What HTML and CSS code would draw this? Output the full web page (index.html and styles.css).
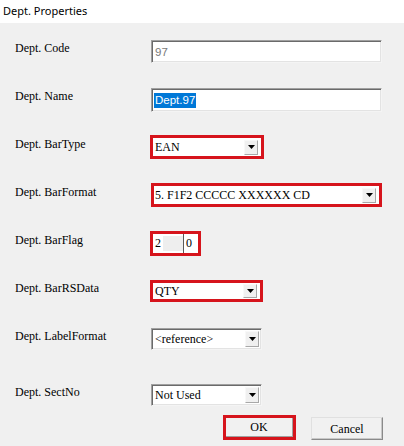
FILE: index.html
```html
<!DOCTYPE html>
<html>
<head>
<meta charset="utf-8">
<link rel="stylesheet" href="styles.css">
</head>
<body>
<div class="title">Dept. Properties</div>
<div class="form">
  <div class="row">
    <div class="label">Dept. Code</div>
    <div class="edit disabled">97</div>
  </div>
  <div class="row">
    <div class="label">Dept. Name</div>
    <div class="edit tall"><span class="sel">Dept.97</span></div>
  </div>
  <div class="row">
    <div class="label">Dept. BarType</div>
    <div class="hl hl-type up left">
      <span class="txt">EAN</span>
      <span class="arrow"><svg width="7" height="4" viewBox="0 0 7 4"><path d="M0 0H7L3.5 4Z"/></svg></span>
    </div>
  </div>
  <div class="row">
    <div class="label">Dept. BarFormat</div>
    <div class="hl hl-format up">
      <span class="txt">5. F1F2 CCCCC XXXXXX CD</span>
      <span class="arrow"><svg width="7" height="4" viewBox="0 0 7 4"><path d="M0 0H7L3.5 4Z"/></svg></span>
    </div>
  </div>
  <div class="row">
    <div class="label">Dept. BarFlag</div>
    <div class="hl hl-flag up left">
      <span class="flag-a">2</span>
      <span class="flag-gap"></span>
      <span class="flag-sep"></span>
      <span class="flag-b">0</span>
    </div>
  </div>
  <div class="row">
    <div class="label">Dept. BarRSData</div>
    <div class="hl hl-rs left">
      <span class="txt">QTY</span>
      <span class="arrow"><svg width="7" height="4" viewBox="0 0 7 4"><path d="M0 0H7L3.5 4Z"/></svg></span>
    </div>
  </div>
  <div class="row">
    <div class="label">Dept. LabelFormat</div>
    <div class="combo">
      <span class="txt">&lt;reference&gt;</span>
      <span class="arrow"><svg width="7" height="4" viewBox="0 0 7 4"><path d="M0 0H7L3.5 4Z"/></svg></span>
    </div>
  </div>
  <div class="row last">
    <div class="label">Dept. SectNo</div>
    <div class="combo">
      <span class="txt">Not Used</span>
      <span class="arrow"><svg width="7" height="4" viewBox="0 0 7 4"><path d="M0 0H7L3.5 4Z"/></svg></span>
    </div>
  </div>
</div>
<div class="buttons">
  <div class="ok-wrap"><div class="btn ok">OK</div></div>
  <div class="btn cancel">Cancel</div>
</div>
</body>
</html>
```

FILE: styles.css
```css
html, body {
  margin: 0;
  padding: 0;
}

body {
  width: 404px;
  height: 446px;
  overflow: hidden;
  background: #f0f0f0;
  font-family: "Liberation Serif", "Times New Roman", serif;
  font-size: 12px;
  color: #000;
}

.title {
  height: 23px;
  background: #fff;
  font-family: "Noto Sans", "Liberation Sans", sans-serif;
  font-size: 11px;
  line-height: 22px;
  padding-left: 3px;
}

.form {
  padding: 17px 0 0 15px;
}

.row {
  display: flex;
  align-items: flex-start;
  height: 48px;
}

.row.last {
  margin-top: 8px;
  height: 31px;
}

.label {
  width: 136px;
  flex: none;
  line-height: 16px;
}

.edit {
  box-sizing: border-box;
  width: 231px;
  height: 23px;
  background: #fff;
  border-top: 1px solid #a0a0a0;
  border-left: 1px solid #a0a0a0;
  border-right: 1px solid #f4f4f4;
  border-bottom: 1px solid #f4f4f4;
  box-shadow: inset 1px 1px 0 #6a6a6a, inset -1px -1px 0 #e3e3e3;
  font-family: "Liberation Sans", Arial, sans-serif;
  font-size: 11.5px;
  display: flex;
  align-items: center;
  padding-left: 3px;
}

.edit.tall {
  height: 24px;
  padding-left: 2px;
}

.edit.disabled {
  color: #7a7a7a;
}

.sel {
  background: #0078d7;
  color: #fff;
  line-height: 15px;
  padding: 0 1px;
}

.hl {
  box-sizing: border-box;
  border: 3px solid #d6141c;
  background: #fff;
  display: flex;
  align-items: center;
}

.hl.up {
  margin-top: -1px;
}

.hl.left {
  margin-left: -1px;
}

.hl-type {
  width: 114px;
  height: 24px;
  padding-left: 2px;
}

.hl-format {
  width: 231px;
  height: 24px;
  padding-left: 1px;
}

.hl-flag {
  width: 51px;
  height: 25px;
  padding-left: 2px;
  align-items: stretch;
}

.hl-rs {
  width: 113px;
  height: 22px;
  padding-left: 2px;
}

.txt {
  flex: 1;
  white-space: nowrap;
  line-height: 16px;
}

.arrow {
  box-sizing: border-box;
  flex: none;
  width: 14px;
  height: 15px;
  margin-right: 3px;
  background: #f0f0f0;
  border-top: 1px solid #f8f8f8;
  border-left: 1px solid #f8f8f8;
  border-right: 1px solid #a8a8a8;
  border-bottom: 1px solid #a8a8a8;
  display: flex;
  align-items: center;
  justify-content: center;
}

.arrow svg {
  display: block;
  fill: #000;
}

.hl-rs .arrow {
  height: 14px;
}

.flag-a {
  width: 8px;
  display: flex;
  align-items: center;
}

.flag-gap {
  width: 20px;
  margin: 2px 0;
  background: #eeeeee;
}

.flag-sep {
  width: 1px;
  background: #5a5a5a;
}

.flag-b {
  padding-left: 2px;
  display: flex;
  align-items: center;
}

.combo {
  box-sizing: border-box;
  width: 111px;
  height: 22px;
  background: #fff;
  border-top: 1px solid #a0a0a0;
  border-left: 1px solid #a0a0a0;
  border-right: 1px solid #f4f4f4;
  border-bottom: 1px solid #f4f4f4;
  box-shadow: inset 1px 1px 0 #6a6a6a, inset -1px -1px 0 #e3e3e3;
  display: flex;
  align-items: center;
  padding-left: 3px;
}

.combo .arrow {
  margin-right: 2px;
  height: 16px;
}

.buttons {
  display: flex;
  justify-content: flex-end;
  align-items: flex-end;
  gap: 15px;
  padding-right: 21px;
  height: 25px;
}

.ok-wrap {
  box-sizing: border-box;
  width: 73px;
  height: 25px;
  border: 3px solid #d6141c;
  display: flex;
}

.btn {
  box-sizing: border-box;
  display: flex;
  align-items: center;
  justify-content: center;
  background: #f1f1f1;
  line-height: 16px;
}

.ok {
  flex: 1;
  border-right: 1px solid #a0a0a0;
  border-bottom: 1px solid #a0a0a0;
}

.cancel {
  width: 72px;
  height: 23px;
  border-top: 1px solid #e0e0e0;
  border-left: 1px solid #e0e0e0;
  border-right: 1px solid #8a8a8a;
  border-bottom: 1px solid #8a8a8a;
  box-shadow: inset -1px -1px 0 #c8c8c8;
}
```
